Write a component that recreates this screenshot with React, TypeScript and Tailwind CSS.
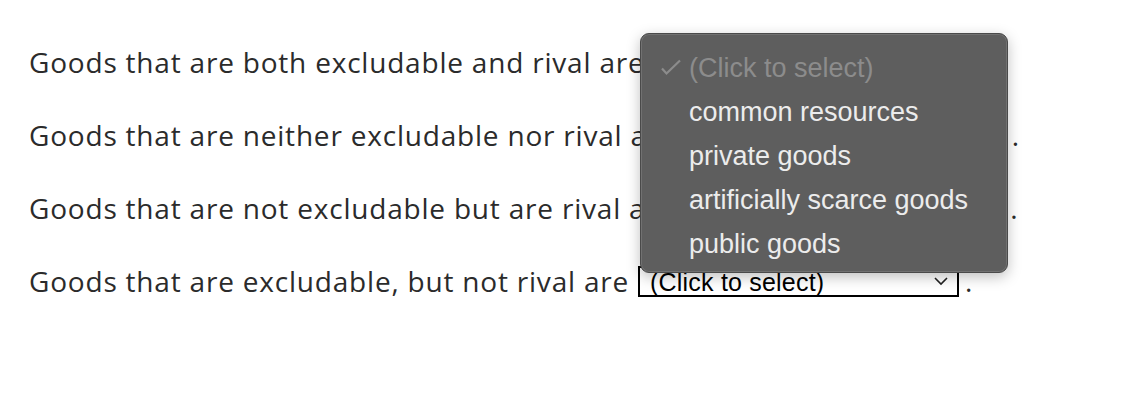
import React from "react";

const OPTIONS = ["common resources", "private goods", "artificially scarce goods", "public goods"];

const ROWS = [
  "Goods that are both excludable and rival are",
  "Goods that are neither excludable nor rival are",
  "Goods that are not excludable but are rival are",
  "Goods that are excludable, but not rival are",
];

const SelectBox: React.FC = () => (
  <div
    className="w-[321px] h-[31px] shrink-0 border-2 border-black bg-white flex items-center pl-[10px] pr-[8px] ml-[9px] text-[25px] tracking-[0.2px] text-black"
    style={{ fontFamily: '"Liberation Sans", Arial, sans-serif' }}
  >
    <span className="flex-1 leading-none pt-[2px]">(Click to select)</span>
    <svg width="16" height="10" viewBox="0 0 16 10" fill="none" stroke="#222" strokeWidth="1.6">
      <path d="M2 2l6 6 6-6" />
    </svg>
  </div>
);

export default function App() {
  return (
    <div className="relative w-[1146px] h-[396px] bg-white overflow-hidden">
      <div
        className="flex flex-col gap-[43px] pt-[47px] pl-[29px] text-[28px] tracking-[0.8px] text-[#2b2b2b]"
        style={{ fontFamily: '"Open Sans", Lato, sans-serif' }}
      >
        {ROWS.map((text) => (
          <div key={text} className="flex items-center h-[30px] whitespace-nowrap">
            <span>{text}</span>
            <SelectBox />
            <span className="ml-[6px]">.</span>
          </div>
        ))}
      </div>

      <div
        className="absolute left-[640px] top-[33px] w-[368px] h-[240px] rounded-[9px] bg-[#5e5e5e] border border-[#4a4a4a] shadow-[0_4px_14px_rgba(0,0,0,0.25),inset_0_0_0_1px_rgba(255,255,255,0.12)] pt-[12px] text-[27px]"
        style={{ fontFamily: '"Liberation Sans", Arial, sans-serif' }}
      >
        <div className="h-[44px] flex items-center text-[#8c8c8c]">
          <svg width="48" height="20" viewBox="0 0 48 20" fill="none" stroke="#8c8c8c" strokeWidth="2.2">
            <path d="M21 10.5l4.5 5L39 2.5" />
          </svg>
          <span>(Click to select)</span>
        </div>
        {OPTIONS.map((opt) => (
          <div key={opt} className="h-[44px] flex items-center pl-[48px] text-[#ececec]">
            {opt}
          </div>
        ))}
      </div>
    </div>
  );
}
